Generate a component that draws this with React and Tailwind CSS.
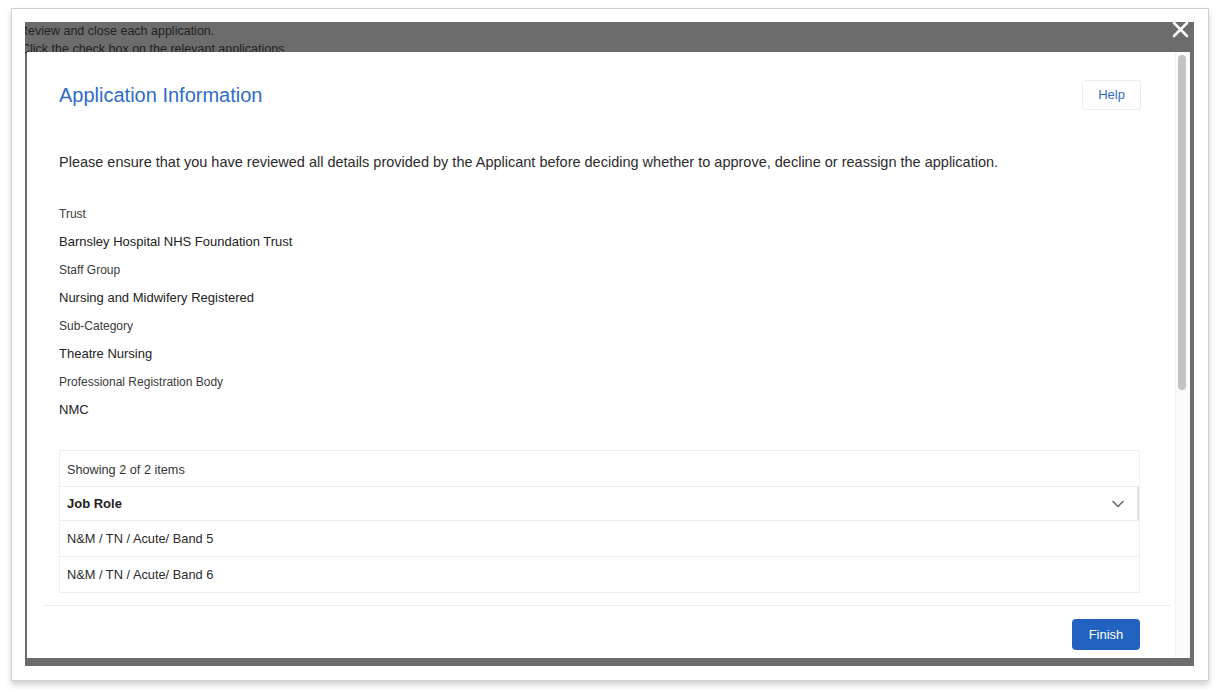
const FIELDS = [
  { label: "Trust", value: "Barnsley Hospital NHS Foundation Trust" },
  { label: "Staff Group", value: "Nursing and Midwifery Registered" },
  { label: "Sub-Category", value: "Theatre Nursing" },
  { label: "Professional Registration Body", value: "NMC" },
];

const ROLES = ["N&M / TN / Acute/ Band 5", "N&M / TN / Acute/ Band 6"];

function Chevron() {
  return (
    <svg width="14" height="14" viewBox="0 0 14 14" fill="none">
      <path d="M2 4.5 L7 9.5 L12 4.5" stroke="#6b6b6b" strokeWidth="1.6" strokeLinecap="round" strokeLinejoin="round" />
    </svg>
  );
}

export default function App() {
  return (
    <div
      className="h-[696px] w-[1220px] overflow-hidden bg-white pl-[11px] pt-[8px]"
      style={{ fontFamily: '"Liberation Sans", Arial, sans-serif' }}
    >
      {/* framed screenshot */}
      <div className="relative h-[673px] w-[1198px] border border-[#cfcfcf] bg-white pl-[13px] pt-[13px] shadow-[0_4px_6px_rgba(0,0,0,0.18)]">
        {/* close button on overlay */}
        <svg className="absolute left-[1160px] top-[12px]" width="17" height="17" viewBox="0 0 17 17">
          <path d="M2 2 L15 15 M15 2 L2 15" stroke="#ffffff" strokeWidth="2.6" strokeLinecap="round" />
        </svg>

        <div className="flex h-[644px] w-[1169px] flex-col overflow-hidden bg-[#6c6c6c]">
          {/* page behind the overlay */}
          <div className="h-[30px] overflow-visible pl-[1px] text-[12.5px] leading-[18px] text-[#1f1f1f]">
            <p className="ml-[-7px]">Review and close each application.</p>
            <p className="ml-[-5px]">Click the check box on the relevant applications</p>
          </div>

          <div className="relative flex flex-1 pb-[8px] pl-[2px] pr-[4px]">
            {/* modal */}
            <div className="flex flex-1 bg-white">
              <div className="flex flex-1 flex-col">
                <div className="flex items-center justify-between pl-[32px] pr-[34px] pt-[28px]">
                  <h1 className="text-[20px] leading-[24px] text-[#2f6cc4]">Application Information</h1>
                  <button className="h-[30px] w-[59px] rounded-[3px] border border-[#ececec] text-[13px] text-[#2f6cc4]">
                    Help
                  </button>
                </div>

                <p className="mt-[42px] pl-[32px] text-[14.5px] leading-[20px] text-[#2b2b2b]">
                  Please ensure that you have reviewed all details provided by the Applicant before deciding whether to approve, decline or reassign the application.
                </p>

                <div className="mt-[29px] pl-[32px]">
                  {FIELDS.map((f) => (
                    <div key={f.label}>
                      <div className="text-[12px] leading-[26px] text-[#3a3a3a]">{f.label}</div>
                      <div className="text-[13px] leading-[30px] text-[#222]">{f.value}</div>
                    </div>
                  ))}
                </div>

                <div className="ml-[32px] mr-[35px] mt-[25px] border border-[#efefef]">
                  <div className="flex h-[35px] items-center pl-[7px] pt-[4px] text-[12.7px] text-[#333]">Showing 2 of 2 items</div>
                  <div className="flex h-[34px] items-center border-t border-[#ececec]">
                    <div className="flex-1 pl-[7px] text-[13px] font-bold text-[#222]">Job Role</div>
                    <div className="flex h-full w-[28px] items-center border-r-2 border-[#e0e0e0]">
                      <Chevron />
                    </div>
                  </div>
                  {ROLES.map((r) => (
                    <div key={r} className="flex h-[36px] items-center border-t border-[#ececec] pl-[7px] text-[12.8px] text-[#2b2b2b]">
                      {r}
                    </div>
                  ))}
                </div>

                <div className="ml-[16px] mr-[4px] mt-[12px] border-t border-[#efefef]" />

                <div className="flex justify-end pr-[35px] pt-[13px]">
                  <button className="h-[31px] w-[68px] rounded-[4px] bg-[#2162c0] text-[13px] text-white">Finish</button>
                </div>
              </div>

              {/* scrollbar */}
              <div className="w-[15px] border-l border-[#f3f3f3] bg-[#fbfbfb] pl-[2px] pt-[3px]">
                <div className="h-[335px] w-[8px] rounded-full bg-[#c3c3c3]" />
              </div>
            </div>
          </div>
        </div>
      </div>
    </div>
  );
}
